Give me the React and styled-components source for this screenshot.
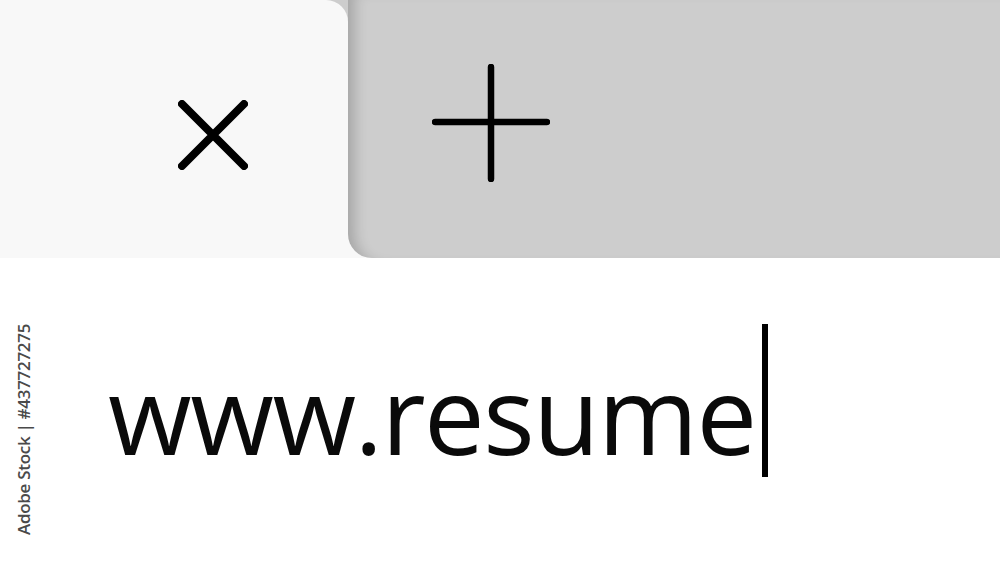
import React from "react";
import styled, { createGlobalStyle } from "styled-components";

const GlobalStyle = createGlobalStyle`
  html, body {
    margin: 0;
    padding: 0;
    background: #ffffff;
    overflow: hidden;
  }
  #root {
    width: 1000px;
    height: 563px;
  }
`;

const Page = styled.div`
  width: 1000px;
  height: 563px;
  display: flex;
  flex-direction: column;
  background: #ffffff;
  position: relative;
  font-family: "Open Sans", "Noto Sans", sans-serif;
`;

const TabStrip = styled.div`
  height: 258px;
  display: flex;
  background: linear-gradient(to bottom, #cdcdcd 50%, #f8f8f8 50%);
`;

const ActiveTab = styled.div`
  width: 348px;
  background: #f8f8f8;
  border-top-right-radius: 22px;
  display: flex;
  align-items: flex-start;
  padding: 100px 0 0 178px;
  box-sizing: border-box;
`;

const InactiveArea = styled.div`
  flex: 1;
  background: #cdcdcd;
  border-bottom-left-radius: 24px;
  box-shadow: inset 16px 0 14px -10px rgba(0, 0, 0, 0.2);
  display: flex;
  align-items: flex-start;
  padding: 64px 0 0 84px;
`;

const IconButton = styled.button`
  border: none;
  background: none;
  padding: 0;
  display: flex;
  cursor: pointer;
`;

const AddressRow = styled.div`
  flex: 1;
  display: flex;
  align-items: flex-start;
  padding: 66px 0 0 108px;
`;

const UrlText = styled.span`
  font-size: 108px;
  line-height: 1;
  margin-top: 36px;
  color: #0a0a0a;
  letter-spacing: -1.5px;
  font-family: "Open Sans", sans-serif;
`;

const Caret = styled.span`
  display: inline-block;
  width: 6px;
  height: 153px;
  background: #000;
  margin-left: 6px;
`;

const Watermark = styled.div`
  position: absolute;
  left: 12px;
  bottom: 28px;
  transform-origin: left bottom;
  transform: rotate(-90deg) translateY(100%);
  font-family: "Open Sans", sans-serif;
  font-size: 17px;
  font-weight: 600;
  letter-spacing: -0.3px;
  color: #4a4a4a;
  white-space: nowrap;
`;

const CloseIcon = () => (
  <svg width="70" height="70" viewBox="0 0 70 70">
    <path
      d="M4 4 L66 66 M66 4 L4 66"
      stroke="#000"
      strokeWidth="8"
      strokeLinecap="round"
    />
  </svg>
);

const PlusIcon = () => (
  <svg width="118" height="118" viewBox="0 0 118 118">
    <path
      d="M3 58 L115 58 M59 3 L59 115"
      stroke="#000"
      strokeWidth="6.5"
      strokeLinecap="round"
    />
  </svg>
);

const App = () => {
  return (
    <Page>
      <GlobalStyle />
      <TabStrip>
        <ActiveTab>
          <IconButton aria-label="Close tab">
            <CloseIcon />
          </IconButton>
        </ActiveTab>
        <InactiveArea>
          <IconButton aria-label="New tab">
            <PlusIcon />
          </IconButton>
        </InactiveArea>
      </TabStrip>
      <AddressRow>
        <UrlText>www.resume</UrlText>
        <Caret />
      </AddressRow>
      <Watermark>Adobe Stock | #437727275</Watermark>
    </Page>
  );
};

export default App;
